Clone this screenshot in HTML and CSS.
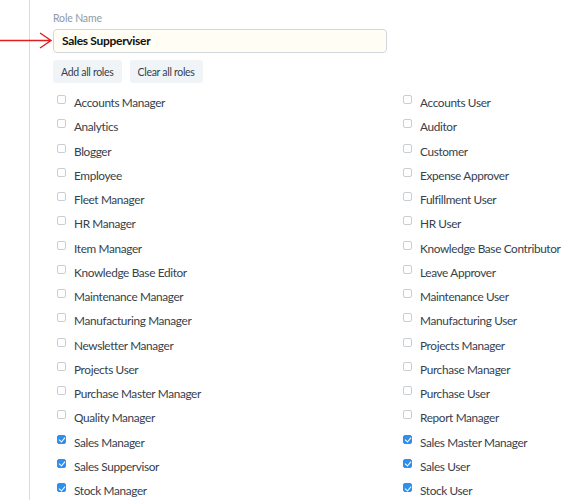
FILE: index.html
```html
<!DOCTYPE html>
<html>
<head>
<meta charset="utf-8">
<link rel="stylesheet" href="styles.css">
</head>
<body>
<svg class="arrow" width="56" height="20" viewBox="0 0 56 20">
  <path d="M0 10.5 H50 M40 3 L51 10.5 L40 18" fill="none" stroke="#e41e1e" stroke-width="1.4"/>
</svg>
<div class="page">
  <div class="field">
    <div class="label">Role Name</div>
    <div class="input">Sales Supperviser</div>
  </div>
  <div class="buttons">
    <button class="btn">Add all roles</button>
    <button class="btn">Clear all roles</button>
  </div>
  <div class="roles">
    <label class="role"><span class="cb"></span>Accounts Manager</label>
    <label class="role"><span class="cb"></span>Accounts User</label>
    <label class="role"><span class="cb"></span>Analytics</label>
    <label class="role"><span class="cb"></span>Auditor</label>
    <label class="role"><span class="cb"></span>Blogger</label>
    <label class="role"><span class="cb"></span>Customer</label>
    <label class="role"><span class="cb"></span>Employee</label>
    <label class="role"><span class="cb"></span>Expense Approver</label>
    <label class="role"><span class="cb"></span>Fleet Manager</label>
    <label class="role"><span class="cb"></span>Fulfillment User</label>
    <label class="role"><span class="cb"></span>HR Manager</label>
    <label class="role"><span class="cb"></span>HR User</label>
    <label class="role"><span class="cb"></span>Item Manager</label>
    <label class="role"><span class="cb"></span>Knowledge Base Contributor</label>
    <label class="role"><span class="cb"></span>Knowledge Base Editor</label>
    <label class="role"><span class="cb"></span>Leave Approver</label>
    <label class="role"><span class="cb"></span>Maintenance Manager</label>
    <label class="role"><span class="cb"></span>Maintenance User</label>
    <label class="role"><span class="cb"></span>Manufacturing Manager</label>
    <label class="role"><span class="cb"></span>Manufacturing User</label>
    <label class="role"><span class="cb"></span>Newsletter Manager</label>
    <label class="role"><span class="cb"></span>Projects Manager</label>
    <label class="role"><span class="cb"></span>Projects User</label>
    <label class="role"><span class="cb"></span>Purchase Manager</label>
    <label class="role"><span class="cb"></span>Purchase Master Manager</label>
    <label class="role"><span class="cb"></span>Purchase User</label>
    <label class="role"><span class="cb"></span>Quality Manager</label>
    <label class="role"><span class="cb"></span>Report Manager</label>
    <label class="role"><span class="cb checked"></span>Sales Manager</label>
    <label class="role"><span class="cb checked"></span>Sales Master Manager</label>
    <label class="role"><span class="cb checked"></span>Sales Suppervisor</label>
    <label class="role"><span class="cb checked"></span>Sales User</label>
    <label class="role"><span class="cb checked"></span>Stock Manager</label>
    <label class="role"><span class="cb checked"></span>Stock User</label>
  </div>
</div>
</body>
</html>
```
FILE: styles.css
```css
html, body {
  margin: 0;
  padding: 0;
  background: #fff;
  overflow: hidden;
}
body {
  font-family: Lato, "Noto Sans", sans-serif;
  color: #36414c;
  position: relative;
  height: 500px;
}
.arrow {
  position: absolute;
  left: 0;
  top: 30px;
}
.page {
  margin-left: 29px;
  border-left: 1px solid #d8dde2;
  padding-left: 23px;
  height: 500px;
  box-sizing: border-box;
  padding-top: 11px;
}
.label {
  font-size: 10.5px;
  letter-spacing: -0.15px;
  color: #8d99a6;
  line-height: 15px;
  height: 18px;
}
.input {
  width: 334px;
  height: 24px;
  box-sizing: border-box;
  border: 1px solid #d1d8dd;
  border-radius: 4px;
  background: #fffdf4;
  font-weight: 700;
  font-size: 12px;
  letter-spacing: -0.3px;
  color: #111;
  line-height: 22px;
  padding-left: 8px;
}
.buttons {
  display: flex;
  gap: 8px;
  margin-top: 7px;
}
.btn {
  font-family: inherit;
  font-size: 10.5px;
  letter-spacing: -0.3px;
  color: #36414c;
  background: #f0f4f7;
  border: none;
  border-radius: 3px;
  height: 23px;
  padding: 0 8px;
}
.roles {
  display: grid;
  grid-template-columns: 346px 346px;
  grid-auto-rows: 24.25px;
  margin-top: 8px;
  padding-left: 4px;
}
.role {
  display: flex;
  align-items: flex-start;
  font-size: 11.8px;
  letter-spacing: -0.35px;
  color: #36414c;
  line-height: 24px;
  white-space: nowrap;
}
.cb {
  width: 9px;
  height: 9px;
  box-sizing: border-box;
  border: 1px solid #c8ced4;
  border-radius: 2px;
  margin-top: 4px;
  margin-right: 8px;
  background: #fff;
  position: relative;
  flex: none;
}
.cb.checked {
  background: #2d8ff0;
  border-color: #2d8ff0;
}
.cb.checked::after {
  content: "";
  position: absolute;
  left: 1.5px;
  top: 0.5px;
  width: 3px;
  height: 5px;
  border: solid #fff;
  border-width: 0 1.5px 1.5px 0;
  transform: rotate(40deg);
}
```
